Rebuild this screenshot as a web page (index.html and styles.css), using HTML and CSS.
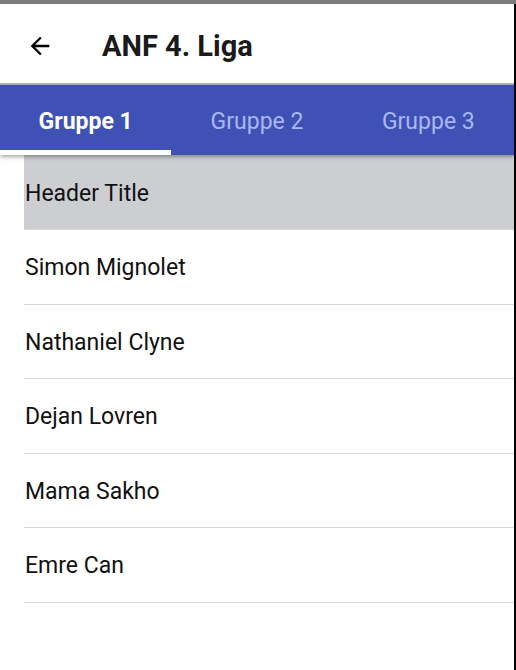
FILE: index.html
```html
<!DOCTYPE html>
<html lang="de">
<head>
  <meta charset="UTF-8" />
  <meta name="viewport" content="width=device-width, initial-scale=1.0"/>
  <title>ANF 4. Liga</title>
  <link rel="stylesheet" href="styles.css">
</head>
<body>
  <div class="screen">
    <header class="toolbar">
      <button class="back" aria-label="Zurück">
        <svg width="24" height="24" viewBox="0 0 24 24">
          <path d="M20 11H7.83l5.59-5.59L12 4l-8 8 8 8 1.41-1.41L7.83 13H20v-2z" fill="#000"/>
        </svg>
      </button>
      <h1>ANF 4. Liga</h1>
    </header>

    <nav class="tabs">
      <div class="tab active">Gruppe 1</div>
      <div class="tab">Gruppe 2</div>
      <div class="tab">Gruppe 3</div>
    </nav>

    <ul class="list">
      <li class="list-header">Header Title</li>
      <li>Simon Mignolet</li>
      <li>Nathaniel Clyne</li>
      <li>Dejan Lovren</li>
      <li>Mama Sakho</li>
      <li>Emre Can</li>
    </ul>
  </div>
</body>
</html>
```

FILE: styles.css
```css
html, body {
  margin: 0;
  height: 100%;
}

body {
  font-family: Roboto, 'Noto Sans', sans-serif;
  background: #000;
  border-top: 4px solid #7b7b7b;
  box-sizing: border-box;
}

.screen {
  width: 514px;
  height: 100%;
  background: #fff;
}

.toolbar {
  height: 81px;
  display: flex;
  align-items: center;
  border-bottom: 2px solid #b4b4b4;
  padding-top: 4px;
  box-sizing: border-box;
}

.back {
  border: none;
  background: none;
  padding: 0;
  margin-left: 26px;
  width: 28px;
  height: 28px;
  display: flex;
  align-items: center;
  justify-content: center;
}

.back svg {
  width: 28px;
  height: 28px;
}

.toolbar h1 {
  margin: 0 0 0 48px;
  font-size: 29px;
  font-weight: 700;
  color: #1a1a1a;
}

.tabs {
  display: flex;
  height: 70px;
  background: #3f51b5;
  position: relative;
  z-index: 1;
  box-shadow: 0 2px 4px rgba(0, 0, 0, 0.35);
}

.tab {
  flex: 1;
  display: flex;
  align-items: center;
  justify-content: center;
  font-size: 23px;
  color: #a9b8f4;
  position: relative;
  padding-top: 3px;
}

.tab.active {
  color: #fff;
  font-weight: 700;
}

.tab.active::after {
  content: '';
  position: absolute;
  left: 0;
  right: 0;
  bottom: 0;
  height: 5px;
  background: #fff;
}

.list {
  list-style: none;
  margin: 0 0 0 24px;
  padding: 0;
}

.list li {
  height: 74.5px;
  display: flex;
  align-items: center;
  padding: 2px 0 0 1px;
  font-size: 23px;
  color: #111;
  border-bottom: 1px solid #d9d9d9;
  box-sizing: border-box;
}

.list .list-header {
  background: #cdced2;
  height: 75px;
}
```
